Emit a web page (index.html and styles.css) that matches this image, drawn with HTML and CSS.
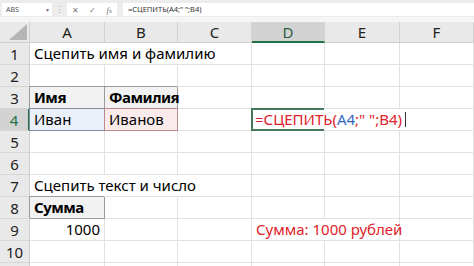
FILE: index.html
```html
<!DOCTYPE html>
<html lang="ru">
<head>
    <meta charset="UTF-8">
    <meta name="viewport" content="width=device-width, initial-scale=1.0">
    <title>СЦЕПИТЬ</title>
    <link rel="stylesheet" href="styles.css">
</head>
<body>

    <!-- Formula bar -->
    <div class="formula-bar">
        <div class="name-box"><span>ABS</span><span class="arrow">▾</span></div>
        <span class="grip">⋮</span>
        <div class="fx-buttons">
            <span>✕</span>
            <span>✓</span>
            <span class="fx"><i>f</i><small>x</small></span>
        </div>
        <div class="formula-input">=СЦЕПИТЬ(A4;" ";B4)</div>
    </div>

    <!-- Sheet -->
    <div class="sheet">
        <div class="corner"><span class="triangle"></span></div>
        <div class="col-head">A</div>
        <div class="col-head">B</div>
        <div class="col-head">C</div>
        <div class="col-head active">D</div>
        <div class="col-head">E</div>
        <div class="col-head">F</div>

        <div class="row-head">1</div>
        <div class="cell span3">Сцепить имя и фамилию</div>
        <div class="cell"></div><div class="cell"></div><div class="cell"></div>

        <div class="row-head">2</div>
        <div class="cell"></div><div class="cell"></div><div class="cell"></div>
        <div class="cell"></div><div class="cell"></div><div class="cell"></div>

        <div class="row-head">3</div>
        <div class="cell boxed"><b>Имя</b></div>
        <div class="cell boxed"><b>Фамилия</b></div>
        <div class="cell"></div><div class="cell"></div><div class="cell"></div><div class="cell"></div>

        <div class="row-head active">4</div>
        <div class="cell ref-a">Иван</div>
        <div class="cell ref-b">Иванов</div>
        <div class="cell"></div>
        <div class="cell span3 editing">
            <span class="red">=СЦЕПИТЬ(</span><span class="blue">A4</span><span class="red">;" ";B4)</span><span class="caret"></span>
        </div>

        <div class="row-head">5</div>
        <div class="cell"></div><div class="cell"></div><div class="cell"></div>
        <div class="cell"></div><div class="cell"></div><div class="cell"></div>

        <div class="row-head">6</div>
        <div class="cell"></div><div class="cell"></div><div class="cell"></div>
        <div class="cell"></div><div class="cell"></div><div class="cell"></div>

        <div class="row-head">7</div>
        <div class="cell span3">Сцепить текст и число</div>
        <div class="cell"></div><div class="cell"></div><div class="cell"></div>

        <div class="row-head">8</div>
        <div class="cell boxed"><b>Сумма</b></div>
        <div class="cell"></div><div class="cell"></div><div class="cell"></div><div class="cell"></div><div class="cell"></div>

        <div class="row-head">9</div>
        <div class="cell num">1000</div>
        <div class="cell"></div><div class="cell"></div>
        <div class="cell span2 red">Сумма: 1000 рублей</div>
        <div class="cell"></div>

        <div class="row-head">10</div>
        <div class="cell"></div><div class="cell"></div><div class="cell"></div>
        <div class="cell"></div><div class="cell"></div><div class="cell"></div>

        <!-- partly visible row below the frame -->
        <div class="row-head"></div>
        <div class="cell"></div><div class="cell"></div><div class="cell"></div>
        <div class="cell"></div><div class="cell"></div><div class="cell"></div>
    </div>

</body>
</html>
```

FILE: styles.css
```css
body {
    margin: 0;
    font-family: "Noto Sans", "Open Sans", sans-serif;
    background-color: #fff;
    color: #000;
    overflow: hidden;
}

/* Formula bar */
.formula-bar {
    display: flex;
    height: 22px;
    box-sizing: border-box;
    padding: 3px 0 0 2px;
    background-color: #ececec;
    border-bottom: 5px solid #f5f5f5;
}

.name-box {
    width: 50px;
    height: 13px;
    box-sizing: border-box;
    padding: 0 3px 0 4px;
    background-color: #fff;
    display: flex;
    justify-content: space-between;
    align-items: center;
    font-size: 7px;
    color: #555;
}

.name-box .arrow {
    font-size: 6px;
    color: #777;
}

.grip {
    width: 15px;
    text-align: center;
    font-size: 9px;
    line-height: 13px;
    color: #aaa;
}

.fx-buttons {
    width: 50px;
    height: 13px;
    background-color: #fff;
    display: flex;
    justify-content: space-around;
    align-items: center;
    font-size: 8px;
    color: #777;
}

.fx-buttons .fx {
    font-family: "Liberation Serif", serif;
    font-size: 9px;
}

.fx-buttons .fx small {
    font-size: 6px;
}

.formula-input {
    flex: 1;
    height: 13px;
    margin-left: 6px;
    padding-left: 5px;
    background-color: #fff;
    font-size: 7.5px;
    line-height: 13px;
    color: #333;
}

/* Sheet grid */
.sheet {
    display: grid;
    grid-template-columns: 30px 75px 73px 74px 73px 75px 74px;
    grid-template-rows: 21px repeat(11, 22px);
    font-size: 15px;
}

.corner {
    background-color: #e9e9e9;
    border-right: 1px solid #cfcfcf;
    border-bottom: 1px solid #cfcfcf;
    display: flex;
    justify-content: flex-end;
    align-items: flex-end;
    padding: 0 2px 2px 0;
}

.triangle {
    width: 0;
    height: 0;
    border-left: 18px solid transparent;
    border-bottom: 16px solid #b5b5b5;
}

.col-head {
    background-color: #e9e9e9;
    border-right: 1px solid #d2d2d2;
    border-bottom: 1px solid #cfcfcf;
    text-align: center;
    line-height: 21px;
    color: #222;
}

.col-head.active {
    background-color: #d3d3d3;
    border-bottom: 2px solid #217346;
    color: #2a5e40;
}

.row-head {
    background-color: #e9e9e9;
    border-right: 1px solid #cfcfcf;
    border-bottom: 1px solid #d6d6d6;
    text-align: center;
    line-height: 22px;
    color: #222;
}

.row-head.active {
    background-color: #d3d3d3;
    border-right: 2px solid #217346;
    color: #217346;
}

.cell {
    box-sizing: border-box;
    padding-left: 4px;
    border-right: 1px solid #e1e1e1;
    border-bottom: 1px solid #e1e1e1;
    line-height: 21px;
    white-space: nowrap;
    overflow: visible;
}

.cell b {
    letter-spacing: -0.5px;
}

.span3 {
    grid-column: span 3;
}

.span2 {
    grid-column: span 2;
}

.boxed {
    background-color: #f2f2f2;
    border-right-color: #9a9a9a;
    border-bottom-color: #9a9a9a;
    box-shadow: -1px -1px 0 0 #9a9a9a;
}

.ref-a {
    background-color: #eaf1fb;
    border-right-color: #7f8da3;
    border-bottom-color: #7f8da3;
    box-shadow: -1px -1px 0 0 #7f8da3;
}

.ref-b {
    background-color: #fcebec;
    border-right-color: #b98a8d;
    border-bottom-color: #b98a8d;
    box-shadow: -1px -1px 0 0 #b98a8d;
}

.num {
    text-align: right;
    padding-right: 4px;
}

.red {
    color: #e0222a;
}

.blue {
    color: #3568c0;
}

/* Cell in edit mode */
.editing {
    position: relative;
    padding-left: 3px;
    background-color: #fff;
    display: flex;
    align-items: center;
}

.editing::before {
    content: "";
    position: absolute;
    left: -1px;
    top: -1px;
    width: 73px;
    height: 23px;
    box-sizing: border-box;
    border: 2px solid #45795a;
    border-right: none;
}

.caret {
    width: 1px;
    height: 15px;
    margin-left: 3px;
    background-color: #333;
}
```
